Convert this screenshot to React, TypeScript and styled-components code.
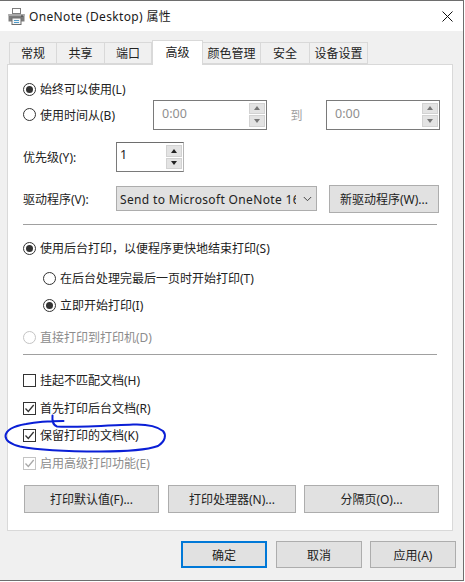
import React from 'react';
import styled, { createGlobalStyle } from 'styled-components';

const GlobalStyle = createGlobalStyle`
  * {
    box-sizing: border-box;
    margin: 0;
    padding: 0;
  }

  body {
    font-family: 'Noto Sans', 'Noto Sans CJK SC', sans-serif;
    font-size: 12px;
    background-color: #fff;
    color: #222;
  }
`;

const Window = styled.div`
  position: relative;
  width: 464px;
  height: 581px;
  background-color: #f0f0f0;
  border-top: 1px solid #6e6e6e;
  border-right: 1px solid #6e6e6e;
  border-bottom: 1px solid #6e6e6e;
`;

const TitleBar = styled.header`
  display: flex;
  align-items: center;
  height: 30px;
  padding: 0 10px 0 8px;
  background-color: #fff;
`;

const TitleText = styled.span`
  margin-left: 4px;
  flex: 1;
  font-size: 12px;
  letter-spacing: 0.35px;
  color: #1a1a1a;
`;

const TabStrip = styled.div`
  display: flex;
  align-items: flex-end;
  height: 33px;
  padding-left: 9px;
`;

const Tab = styled.div<{ $w: number; $active?: boolean }>`
  display: flex;
  align-items: center;
  justify-content: center;
  width: ${p => p.$w}px;
  height: ${p => (p.$active ? 25 : 22)}px;
  margin-bottom: ${p => (p.$active ? -1 : 0)}px;
  padding-bottom: ${p => (p.$active ? 3 : 0)}px;
  background-color: ${p => (p.$active ? '#fff' : '#f0f0f0')};
  border: 1px solid #d9d9d9;
  border-bottom: ${p => (p.$active ? 'none' : '1px solid #d9d9d9')};
  border-left: ${p => (p.$active ? '1px solid #d9d9d9' : 'none')};
  white-space: nowrap;
  position: relative;
  z-index: ${p => (p.$active ? 1 : 0)};

  &:first-child {
    border-left: 1px solid #d9d9d9;
  }
`;

const Panel = styled.main`
  width: 446px;
  height: 467px;
  margin-left: 7px;
  padding: 14px 15px 0 15px;
  background-color: #fff;
  border: 1px solid #d9d9d9;
`;

const Option = styled.div<{ $top?: number; $indent?: number; $disabled?: boolean }>`
  display: flex;
  align-items: center;
  gap: 4px;
  height: 20px;
  margin-top: ${p => p.$top ?? 0}px;
  margin-left: ${p => p.$indent ?? 0}px;
  color: ${p => (p.$disabled ? '#8c8c8c' : '#222')};
  white-space: nowrap;
`;

const RadioMark = styled.span<{ $on?: boolean; $disabled?: boolean }>`
  display: flex;
  align-items: center;
  justify-content: center;
  width: 13px;
  height: 13px;
  flex: none;
  border-radius: 50%;
  border: 1px solid ${p => (p.$disabled ? '#c4c4c4' : '#333')};

  &::after {
    content: '';
    display: ${p => (p.$on ? 'block' : 'none')};
    width: 7px;
    height: 7px;
    border-radius: 50%;
    background-color: #333;
  }
`;

const CheckMark = styled.span<{ $disabled?: boolean }>`
  display: flex;
  align-items: center;
  justify-content: center;
  width: 13px;
  height: 13px;
  flex: none;
  border: 1px solid ${p => (p.$disabled ? '#c4c4c4' : '#333')};
  color: ${p => (p.$disabled ? '#a8a8a8' : '#333')};
`;

const TimeRow = styled.div`
  display: flex;
  align-items: center;
  height: 31px;
`;

const TimeLabel = styled(Option)`
  width: 130px;
  flex: none;
`;

const Spin = styled.div<{ $w: number; $disabled?: boolean }>`
  display: flex;
  flex: none;
  width: ${p => p.$w}px;
  height: 30px;
  padding: 2px 1px 2px 8px;
  background-color: #fff;
  border: 1px solid #7a7a7a;
  color: ${p => (p.$disabled ? '#8f8f8f' : '#222')};
`;

const PrioritySpin = styled(Spin)`
  padding-left: 3px;
  border-right-color: #b5b5b5;
  border-top-color: #6e6e6e;
`;

const SpinValue = styled.span<{ $line: number }>`
  flex: 1;
  line-height: ${p => p.$line}px;
  font-size: 12.5px;
`;

const SpinButtons = styled.div`
  display: flex;
  flex-direction: column;
  gap: 1px;
  width: 16px;
  flex: none;
`;

const SpinButton = styled.span<{ $dark?: boolean; $down?: boolean }>`
  display: flex;
  align-items: center;
  justify-content: center;
  flex: 1;
  background-color: #e3e3e3;
  border: 1px solid #d2d2d2;

  &::after {
    content: '';
    width: 0;
    height: 0;
    border-left: 3.5px solid transparent;
    border-right: 3.5px solid transparent;
    ${p => (p.$down ? 'border-top' : 'border-bottom')}: 4px solid ${p => (p.$dark ? '#222' : '#777')};
  }
`;

const ToLabel = styled.span`
  width: 59px;
  flex: none;
  text-align: center;
  color: #a0a0a0;
`;

const FieldRow = styled.div<{ $top: number }>`
  display: flex;
  align-items: center;
  height: ${p => (p.$top === 12 ? 30 : 28)}px;
  margin-top: ${p => p.$top}px;
`;

const FieldLabel = styled.span`
  width: 93px;
  flex: none;
`;

const Select = styled.div`
  display: flex;
  align-items: center;
  width: 201px;
  height: 25px;
  margin-top: -1px;
  padding: 1px 4px 0 3px;
  background-color: #e1e1e1;
  border: 1px solid #adadad;
  flex: none;
`;

const SelectText = styled.span`
  width: 177px;
  margin-right: 7px;
  overflow: hidden;
  white-space: nowrap;
  letter-spacing: 0.35px;
`;

const Divider = styled.hr<{ $top: number; $bottom: number }>`
  width: 414px;
  height: 1px;
  margin-top: ${p => p.$top}px;
  margin-bottom: ${p => p.$bottom}px;
  border: none;
  background-color: #a0a0a0;
`;

const Button = styled.button<{ $w: number; $h?: number; $default?: boolean }>`
  width: ${p => p.$w}px;
  height: ${p => p.$h ?? 28}px;
  flex: none;
  font-family: inherit;
  font-size: 12px;
  color: #222;
  background-color: #e1e1e1;
  border: ${p => (p.$default ? '2px solid #0078d7' : '1px solid #adadad')};
`;

const NewDriverButton = styled(Button)`
  margin-left: 12px;
`;

const ButtonRow = styled.div`
  display: flex;
  gap: 8px;
  margin: 12px 0 0 1px;

  & > :nth-child(2) {
    margin-left: 1px;
  }
`;

const Footer = styled.footer`
  display: flex;
  justify-content: flex-end;
  gap: 8px;
  padding: 10px 7px 0 0;

  & > :nth-child(2) {
    margin-left: 1px;
  }
`;

const Ink = styled.svg`
  position: absolute;
  left: 0;
  top: -1px;
  pointer-events: none;
`;

const PrinterIcon = () => (
  <svg width="17" height="17" viewBox="0 0 17 17">
    <rect x="4.500" y="0.500" width="8" height="5" fill="#fff" stroke="#7d7d7d" />
    <path d="M0.500 6h16v7.500H0.500z" fill="#7c7c7c" />
    <path d="M0.500 6h16v2H0.500z" fill="#a8a8a8" />
    <rect x="4" y="10" width="9" height="6.500" fill="#f4f4f4" stroke="#6d6d6d" />
    <path d="M6 12.500h5M6 14.500h5" stroke="#4f9ac8" />
    <rect x="13" y="7.500" width="2" height="1" fill="#3f3f3f" />
  </svg>
);

const CloseIcon = () => (
  <svg width="11" height="11" viewBox="0 0 11 11">
    <path d="M0.500 0.500L10.500 10.500M10.500 0.500L0.500 10.500" stroke="#111" strokeWidth="1" fill="none" />
  </svg>
);

const Tick = () => (
  <svg width="11" height="11" viewBox="0 0 11 11">
    <path d="M1.500 5.500L4.300 8.500L9.700 2" stroke="currentColor" strokeWidth="1.300" fill="none" />
  </svg>
);

const Chevron = () => (
  <svg width="9" height="6" viewBox="0 0 9 6">
    <path d="M0.800 1L4.500 4.700L8.200 1" stroke="#444" strokeWidth="1" fill="none" />
  </svg>
);

const tabs = [
  { label: '常规', w: 48 },
  { label: '共享', w: 48 },
  { label: '端口', w: 47 },
  { label: '高级', w: 51, active: true },
  { label: '颜色管理', w: 58 },
  { label: '安全', w: 49 },
  { label: '设备设置', w: 58 },
];

function TimeSpin() {
  return (
    <Spin $w={114} $disabled>
      <SpinValue $line={22}>0:00</SpinValue>
      <SpinButtons>
        <SpinButton />
        <SpinButton $down />
      </SpinButtons>
    </Spin>
  );
}

function App() {
  return (
    <Window>
      <GlobalStyle />
      <TitleBar>
        <PrinterIcon />
        <TitleText>OneNote (Desktop) 属性</TitleText>
        <CloseIcon />
      </TitleBar>

      <TabStrip>
        {tabs.map(t => (
          <Tab key={t.label} $w={t.w} $active={t.active}>{t.label}</Tab>
        ))}
      </TabStrip>

      <Panel>
        <Option>
          <RadioMark $on />
          始终可以使用(L)
        </Option>
        <TimeRow>
          <TimeLabel>
            <RadioMark />
            使用时间从(B)
          </TimeLabel>
          <TimeSpin />
          <ToLabel>到</ToLabel>
          <TimeSpin />
        </TimeRow>

        <FieldRow $top={12}>
          <FieldLabel>优先级(Y):</FieldLabel>
          <PrioritySpin $w={68}>
            <SpinValue $line={20}>1</SpinValue>
            <SpinButtons>
              <SpinButton $dark />
              <SpinButton $dark $down />
            </SpinButtons>
          </PrioritySpin>
        </FieldRow>

        <FieldRow $top={13}>
          <FieldLabel>驱动程序(V):</FieldLabel>
          <Select>
            <SelectText>Send to Microsoft OneNote 16</SelectText>
            <Chevron />
          </Select>
          <NewDriverButton $w={110}>新驱动程序(W)...</NewDriverButton>
        </FieldRow>

        <Divider $top={11} $bottom={13} />

        <Option>
          <RadioMark $on />
          使用后台打印，以便程序更快地结束打印(S)
        </Option>
        <Option $top={10} $indent={20}>
          <RadioMark />
          在后台处理完最后一页时开始打印(T)
        </Option>
        <Option $top={7} $indent={20}>
          <RadioMark $on />
          立即开始打印(I)
        </Option>
        <Option $top={12} $disabled>
          <RadioMark $disabled />
          直接打印到打印机(D)
        </Option>

        <Divider $top={7} $bottom={15} />

        <Option>
          <CheckMark />
          挂起不匹配文档(H)
        </Option>
        <Option $top={8}>
          <CheckMark><Tick /></CheckMark>
          首先打印后台文档(R)
        </Option>
        <Option $top={7}>
          <CheckMark><Tick /></CheckMark>
          保留打印的文档(K)
        </Option>
        <Option $top={8} $disabled>
          <CheckMark $disabled><Tick /></CheckMark>
          启用高级打印功能(E)
        </Option>

        <ButtonRow>
          <Button $w={135}>打印默认值(F)...</Button>
          <Button $w={128}>打印处理器(N)...</Button>
          <Button $w={135}>分隔页(O)...</Button>
        </ButtonRow>
      </Panel>

      <Footer>
        <Button $w={86} $h={27} $default>确定</Button>
        <Button $w={86} $h={27}>取消</Button>
        <Button $w={86} $h={27}>应用(A)</Button>
      </Footer>

      <Ink width="464" height="582" viewBox="0 0 464 582">
        <path
          d="M52.500 415.500C52 421 52.500 425 57 426.500C72 427.800 100 426 133 424.500C146 424 156 425.500 163 431C166.500 435 165.500 441 158 446C145 450.500 122 451.500 100 451.500C70 451.500 38 450 20 446.500C10 444 5.500 440 5.500 436C6 430 14 426 26 424C38 421.500 52 421 63.500 421"
          fill="none"
          stroke="#0a1fd6"
          strokeWidth="2"
          strokeLinecap="round"
        />
      </Ink>
    </Window>
  );
}

export default App;
